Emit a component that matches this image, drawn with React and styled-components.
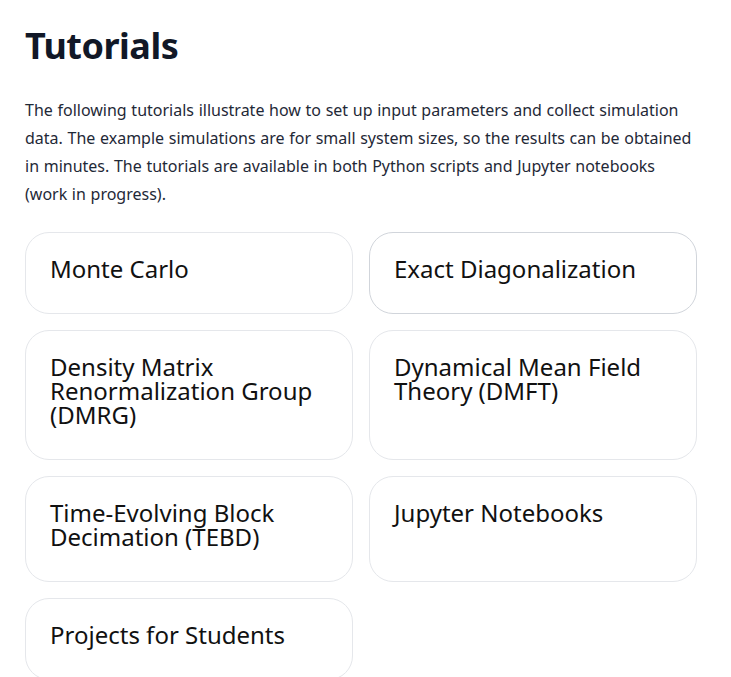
import React from 'react';
import styled, { createGlobalStyle } from 'styled-components';

// =============================================
// DATA
// =============================================
const TUTORIALS = [
  { title: 'Monte Carlo' },
  { title: 'Exact Diagonalization', hovered: true },
  { title: 'Density Matrix Renormalization Group (DMRG)' },
  { title: 'Dynamical Mean Field Theory (DMFT)' },
  { title: 'Time-Evolving Block Decimation (TEBD)' },
  { title: 'Jupyter Notebooks' },
  { title: 'Projects for Students' },
];

const App = () => {
  return (
    <>
      <GlobalStyle />
      <Page>
        <Title>Tutorials</Title>
        <Intro>
          The following tutorials illustrate how to set up input parameters and collect
          simulation data. The example simulations are for small system sizes, so the results
          can be obtained in minutes. The tutorials are available in both Python scripts and
          Jupyter notebooks (work in progress).
        </Intro>
        <CardGrid>
          {TUTORIALS.map(({ title, hovered }) => (
            <Card key={title} $hovered={hovered}>
              <CardTitle>{title}</CardTitle>
            </Card>
          ))}
        </CardGrid>
      </Page>
    </>
  );
};

export default App;

// =============================================
// STYLES
// =============================================
const GlobalStyle = createGlobalStyle`
  body {
    margin: 0;
    background: #ffffff;
    font-family: "Noto Sans", "Open Sans", sans-serif;
  }
`;

const Page = styled.main`
  width: 672px;
  padding: 22px 25px 40px;
`;

const Title = styled.h1`
  margin: 0 0 26px;
  font-size: 36px;
  line-height: 48px;
  font-weight: 700;
  color: #111827;
  letter-spacing: -0.5px;
`;

const Intro = styled.p`
  margin: 0 0 24px;
  font-size: 16px;
  line-height: 28px;
  color: #1f2937;
  word-spacing: 0.5px;
`;

const CardGrid = styled.div`
  display: grid;
  grid-template-columns: 1fr 1fr;
  gap: 16px;
`;

const Card = styled.div`
  border: 1px solid ${({ $hovered }) => ($hovered ? '#d1d5db' : '#e5e7eb')};
  border-radius: 24px;
  padding: 24px 24px 32px;
  background: #fff;
`;

const CardTitle = styled.h2`
  margin: 0;
  font-size: 24px;
  line-height: 24px;
  font-weight: 400;
  color: #111111;
`;
